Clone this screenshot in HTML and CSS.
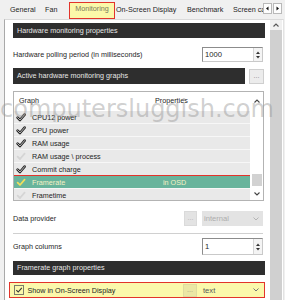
FILE: index.html
```html
<!doctype html>
<html lang="en">
  <head>
    <meta charset="utf-8" />
    <meta name="viewport" content="width=device-width, initial-scale=1" />
    <title>Monitoring properties</title>
    <link rel="stylesheet" href="styles.css">
  </head>
  <body>
    <div class="window">
      <div class="tabs">
        <span class="tab general">General</span>
        <span class="tab fan">Fan</span>
        <span class="tab active">Monitoring</span>
        <span class="tab osd">On-Screen Display</span>
        <span class="tab bench">Benchmark</span>
        <span class="tab capture">Screen capture</span>
        <span class="tab-arrows">
          <span class="arrow-btn"><svg width="7" height="7" viewBox="0 0 7 7"><path d="M4.5 1.5 L2 3.5 L4.5 5.5z" fill="#111"/></svg></span>
          <span class="arrow-btn"><svg width="7" height="7" viewBox="0 0 7 7"><path d="M2.5 1.5 L5 3.5 L2.5 5.5z" fill="#111"/></svg></span>
        </span>
      </div>

      <div class="panel">
        <div class="content">
          <div class="bar">Hardware monitoring properties</div>

          <div class="field polling">
            <span class="label">Hardware polling period (in milliseconds)</span>
            <div class="spin-input">
              <span class="value">1000</span>
              <span class="spinner">
                <svg width="8" height="5" viewBox="0 0 8 5"><path d="M2 4 L4 1.5 L6 4z" fill="#333"/></svg>
                <svg width="8" height="5" viewBox="0 0 8 5"><path d="M2 1 L4 3.5 L6 1z" fill="#333"/></svg>
              </span>
            </div>
          </div>

          <div class="bar-row">
            <div class="bar">Active hardware monitoring graphs</div>
            <span class="dots">...</span>
          </div>

          <div class="list">
            <div class="list-main">
              <div class="list-head">
                <span class="col-graph">Graph</span>
                <span class="col-props">Properties</span>
              </div>
              <div class="row">
                <svg class="check" width="10" height="9" viewBox="0 0 10 9"><path class="ck-out" d="M1.6 4.6 L4 7 L8.6 1.6"/><path class="ck-in" d="M1.6 4.6 L4 7 L8.6 1.6"/></svg>
                <span class="name">CPU12 power</span>
              </div>
              <div class="row">
                <svg class="check" width="10" height="9" viewBox="0 0 10 9"><path class="ck-out" d="M1.6 4.6 L4 7 L8.6 1.6"/><path class="ck-in" d="M1.6 4.6 L4 7 L8.6 1.6"/></svg>
                <span class="name">CPU power</span>
              </div>
              <div class="row">
                <svg class="check" width="10" height="9" viewBox="0 0 10 9"><path class="ck-out" d="M1.6 4.6 L4 7 L8.6 1.6"/><path class="ck-in" d="M1.6 4.6 L4 7 L8.6 1.6"/></svg>
                <span class="name">RAM usage</span>
              </div>
              <div class="row">
                <svg class="check off" width="10" height="9" viewBox="0 0 10 9"><path class="ck-out" d="M1.6 4.6 L4 7 L8.6 1.6"/></svg>
                <span class="name">RAM usage \ process</span>
              </div>
              <div class="row">
                <svg class="check" width="10" height="9" viewBox="0 0 10 9"><path class="ck-out" d="M1.6 4.6 L4 7 L8.6 1.6"/><path class="ck-in" d="M1.6 4.6 L4 7 L8.6 1.6"/></svg>
                <span class="name">Commit charge</span>
              </div>
              <div class="row selected">
                <svg class="check on" width="10" height="9" viewBox="0 0 10 9"><path class="ck-out" d="M1.6 4.6 L4 7 L8.6 1.6"/></svg>
                <span class="name">Framerate</span>
                <span class="prop">in OSD</span>
              </div>
              <div class="row">
                <svg class="check off" width="10" height="9" viewBox="0 0 10 9"><path class="ck-out" d="M1.6 4.6 L4 7 L8.6 1.6"/></svg>
                <span class="name">Frametime</span>
              </div>
            </div>
            <div class="list-scroll">
              <svg class="chev-up" width="8" height="6" viewBox="0 0 8 6"><path d="M1.5 4.5 L4 2 L6.5 4.5" fill="none" stroke="#444" stroke-width="1.1"/></svg>
              <span class="list-thumb"></span>
              <svg class="chev-down" width="8" height="6" viewBox="0 0 8 6"><path d="M1.5 1.5 L4 4 L6.5 1.5" fill="none" stroke="#444" stroke-width="1.1"/></svg>
            </div>
          </div>

          <div class="field provider">
            <span class="label">Data provider</span>
            <span class="dots disabled">...</span>
            <div class="select disabled">
              <span>internal</span>
              <svg width="8" height="6" viewBox="0 0 8 6"><path d="M1.5 1.5 L4 4 L6.5 1.5" fill="none" stroke="#b4b4b4" stroke-width="1"/></svg>
            </div>
          </div>

          <div class="separator"></div>

          <div class="field columns">
            <span class="label">Graph columns</span>
            <div class="spin-input">
              <span class="value">1</span>
              <span class="spinner">
                <svg width="8" height="5" viewBox="0 0 8 5"><path d="M2 4 L4 1.5 L6 4z" fill="#333"/></svg>
                <svg width="8" height="5" viewBox="0 0 8 5"><path d="M2 1 L4 3.5 L6 1z" fill="#333"/></svg>
              </span>
            </div>
          </div>

          <div class="bar short">Framerate graph properties</div>

          <div class="field osd-row">
            <span class="checkbox">
              <svg width="8" height="8" viewBox="0 0 8 8"><path d="M1.3 4.2 L3.2 6 L6.8 1.8" fill="none" stroke="#333" stroke-width="1.1"/></svg>
            </span>
            <span class="label">Show in On-Screen Display</span>
            <span class="dots soft">...</span>
            <div class="select yellow">
              <span>text</span>
              <svg width="8" height="6" viewBox="0 0 8 6"><path d="M1.5 1.5 L4 4 L6.5 1.5" fill="none" stroke="#777" stroke-width="1"/></svg>
            </div>
          </div>
        </div>

        <div class="vscroll">
          <span class="vscroll-btn">
            <svg width="8" height="6" viewBox="0 0 8 6"><path d="M1.5 4.5 L4 2 L6.5 4.5" fill="none" stroke="#555" stroke-width="1.1"/></svg>
          </span>
          <span class="vscroll-thumb"></span>
        </div>
      </div>

      <div class="watermark">computersluggish.com</div>
    </div>
  </body>
</html>
```

FILE: styles.css
```css
* {
  box-sizing: border-box;
}
body {
  margin: 0;
  width: 285px;
  height: 300px;
  overflow: hidden;
  background: #f0f0f0;
  color: #1e1e1e;
  font-family: "Liberation Sans", Arial, sans-serif;
  font-size: 7.2px;
}
.window {
  position: relative;
  height: 300px;
}

/* tabs */
.tabs {
  display: flex;
  align-items: flex-end;
  height: 19px;
  padding-left: 5px;
}
.tab {
  height: 16px;
  line-height: 14px;
  white-space: nowrap;
  overflow: hidden;
}
.general {
  width: 36px;
  padding-left: 5px;
}
.fan {
  width: 28px;
  padding-left: 4px;
}
.active {
  width: 46px;
  height: 17px;
  line-height: 12px;
  margin-bottom: 0;
  text-align: center;
  background: #fbf8a9;
  color: #7b7a5c;
  border: 1.5px solid #e2342b;
}
.osd {
  width: 68px;
  padding-left: 1px;
}
.bench {
  width: 46px;
  padding-left: 4px;
}
.capture {
  width: 34px;
  padding-left: 4px;
}
.tab-arrows {
  display: flex;
  gap: 1px;
  align-self: flex-start;
  margin-top: 3px;
}
.arrow-btn {
  display: flex;
  align-items: center;
  justify-content: center;
  width: 9px;
  height: 11px;
  background: #fdfdfd;
  border: 1px solid #b9b9b9;
}

/* panel */
.panel {
  display: flex;
  margin-left: 4px;
  width: 280px;
  height: 281px;
  background: #fff;
  border-left: 1px solid #a9a9a9;
  border-top: 1px solid #dadada;
  border-right: 1px solid #e3e3e3;
}
.content {
  width: 252px;
  margin-left: 8px;
  padding-top: 3px;
  display: flex;
  flex-direction: column;
}
.bar {
  height: 15px;
  line-height: 15px;
  padding-left: 4px;
  background: #2e2e2e;
  color: #e6e6e6;
}
.bar.short {
  height: 14px;
  line-height: 14px;
  margin-top: 6px;
}
.field {
  display: flex;
  align-items: center;
}
.label {
  flex: 1;
  white-space: nowrap;
}
.polling {
  height: 15px;
  margin-top: 9px;
}
.spin-input {
  display: flex;
  align-items: center;
  width: 61px;
  height: 100%;
  margin-right: 2px;
  border: 1px solid #8c8c8c;
  border-right-color: #c9c9c9;
  border-bottom-color: #c9c9c9;
  background: #fff;
}
.spin-input .value {
  flex: 1;
  padding-left: 2px;
  font-size: 7.6px;
}
.spinner {
  display: flex;
  flex-direction: column;
  justify-content: center;
  width: 9px;
  height: 100%;
  border-left: 1px solid #d6d6d6;
  background: #f4f4f4;
}
.spinner svg {
  display: block;
}
.bar-row {
  display: flex;
  align-items: center;
  margin-top: 6px;
}
.bar-row .bar {
  width: 232px;
  height: 16px;
  line-height: 16px;
}
.dots {
  width: 15px;
  height: 15px;
  margin-left: 4px;
  line-height: 12px;
  text-align: center;
  color: #8a8a8a;
  background: #ececec;
  border: 1px solid #cfcfcf;
}

/* list */
.list {
  display: flex;
  height: 110px;
  margin-top: 7px;
  width: 251px;
  border: 1px solid #b3b3b3;
  background: #fff;
}
.list-main {
  width: 236px;
  overflow: hidden;
}
.list-head {
  display: flex;
  height: 19px;
  line-height: 17px;
}
.col-graph {
  width: 141px;
  padding-left: 5px;
}
.row {
  position: relative;
  display: flex;
  align-items: center;
  height: 13px;
  background: #e9e9e9;
  border-bottom: 1px solid #f7f7f7;
}
.check {
  margin-left: 2px;
  width: 10px;
  fill: none;
  stroke-linecap: round;
  stroke-linejoin: round;
}
.ck-out {
  stroke: #262626;
  stroke-width: 2.6;
}
.ck-in {
  stroke: #dcdcdc;
  stroke-width: 0.8;
}
.check.off .ck-out {
  stroke: #d5d5d5;
  stroke-width: 1.8;
}
.check.on .ck-out {
  stroke: #f1e05a;
  stroke-width: 1.7;
}
.name {
  width: 131px;
  margin-left: 6px;
}
.row.selected {
  background: #68b49c;
  color: #f6f1c4;
  outline: 1.5px solid #e2342b;
}
.list-scroll {
  position: relative;
  flex: 1;
  display: flex;
  flex-direction: column;
  align-items: center;
}
.chev-up {
  margin-top: 6px;
}
.list-thumb {
  width: 10px;
  height: 12px;
  margin-top: 70px;
  background: #d2d2d2;
}
.chev-down {
  margin-top: 5px;
}

/* lower fields */
.provider {
  height: 15px;
  margin-top: 10px;
}
.dots.disabled {
  width: 13px;
  height: 15px;
  margin-left: 0;
  margin-right: 5px;
  background: #e3e3e3;
  border-color: #dadada;
  color: #b5b5b5;
}
.select {
  display: flex;
  align-items: center;
  justify-content: space-between;
  width: 61px;
  height: 15px;
  margin-right: 2px;
  padding: 0 3px 0 2px;
}
.select.disabled {
  background: #e3e3e3;
  color: #adadad;
  font-size: 7.6px;
}
.separator {
  height: 1px;
  margin: 7px 2px 4px 0;
  background: #d0d0d0;
}
.columns {
  height: 17px;
}

/* highlighted OSD option */
.osd-row {
  height: 16px;
  margin-top: 7px;
  margin-left: -4px;
  width: 256px;
  padding-left: 3.5px;
  background: #fbf8ab;
  border: 1.5px solid #e2342b;
}
.checkbox {
  display: flex;
  align-items: center;
  justify-content: center;
  width: 10px;
  height: 10px;
  margin-right: 4px;
  border: 1px solid #7d7d6a;
  background: #fbf8ab;
}
.dots.soft {
  width: 14px;
  height: 13px;
  margin-left: 0;
  margin-right: 4px;
  line-height: 10px;
  background: #ebe7a4;
  border-color: #e0dc9f;
  color: #a5a27a;
}
.select.yellow {
  width: 62px;
  height: 13px;
  margin-right: 1px;
  color: #555;
  font-size: 7.6px;
}

/* main scroll bar */
.vscroll {
  display: flex;
  flex-direction: column;
  width: 12px;
  margin-left: 5px;
}
.vscroll-btn {
  display: flex;
  align-items: center;
  justify-content: center;
  height: 10px;
  background: #f0f0f0;
}
.vscroll-thumb {
  flex: 1;
  background: #d0d0d0;
}

/* watermark */
.watermark {
  position: absolute;
  left: 0;
  top: 97px;
  font-family: "DejaVu Sans", sans-serif;
  font-size: 24px;
  line-height: 24px;
  white-space: nowrap;
  color: rgba(150, 150, 150, 0.45);
  pointer-events: none;
}
```
